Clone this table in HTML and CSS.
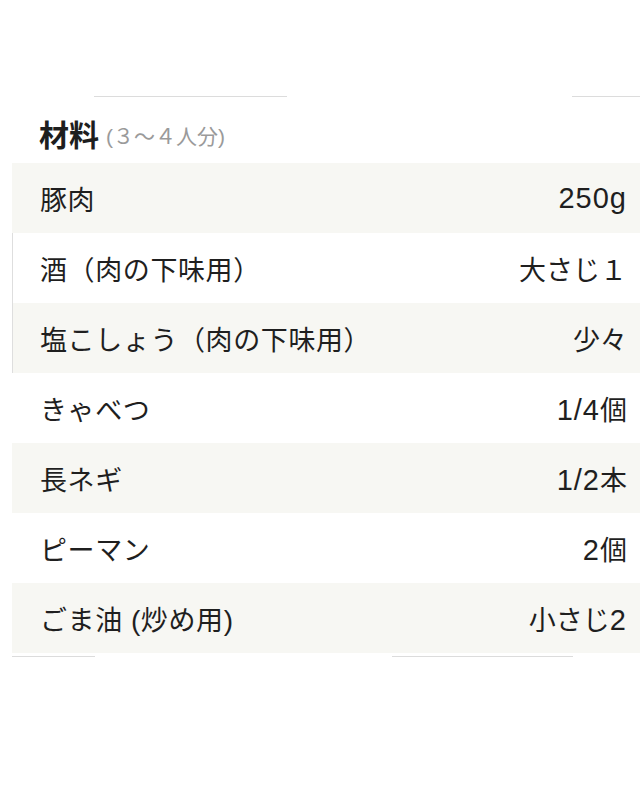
FILE: index.html
```html
<!DOCTYPE html>
<html lang="ja">
<head>
<meta charset="utf-8">
<title>材料</title>
<link rel="stylesheet" href="styles.css">
</head>
<body>
<div class="rules rules-top"><span class="seg seg-a"></span><span class="seg seg-b"></span></div>
<div class="title"><h2>材料</h2><span class="serves">(３〜４人分)</span></div>
<div class="table">
  <div class="row shade"><span class="name">豚肉</span><span class="qty"><span class="num">250g</span></span></div>
  <div class="row edge"><span class="name">酒（肉の下味用）</span><span class="qty">大さじ１</span></div>
  <div class="row shade edge"><span class="name">塩こしょう（肉の下味用）</span><span class="qty">少々</span></div>
  <div class="row"><span class="name">きゃべつ</span><span class="qty"><span class="num">1/4</span>個</span></div>
  <div class="row shade"><span class="name">長ネギ</span><span class="qty"><span class="num">1/2</span>本</span></div>
  <div class="row"><span class="name">ピーマン</span><span class="qty"><span class="num">2</span>個</span></div>
  <div class="row shade"><span class="name">ごま油 <span class="lat">(</span>炒め用<span class="lat">)</span></span><span class="qty">小さじ<span class="num">2</span></span></div>
</div>
<div class="rules rules-bottom"><span class="seg seg-c"></span><span class="seg seg-d"></span></div>
</body>
</html>
```
FILE: styles.css
```css
html, body {
  margin: 0;
  padding: 0;
  background: #fff;
  font-family: "Liberation Sans", "Noto Sans CJK JP", sans-serif;
  color: #222;
}
.rules {
  display: flex;
  height: 1px;
}
.seg {
  display: block;
  height: 1px;
  background: #dcdcdc;
}
.rules-top {
  margin-top: 96px;
}
.seg-a { margin-left: 94px; width: 193px; }
.seg-b { margin-left: 285px; flex: 1; }
.title {
  height: 66px;
  display: flex;
  align-items: center;
  padding-left: 39px;
  padding-top: 6px;
  box-sizing: border-box;
  gap: 7px;
}
.title h2 {
  margin: 0;
  font-size: 30px;
  font-weight: 700;
  color: #1e1e1e;
}
.serves {
  font-size: 21px;
  color: #9a9a9a;
  margin-top: 4px;
}
.table {
  margin-left: 12px;
}
.row {
  height: 70px;
  display: flex;
  align-items: center;
  justify-content: space-between;
  padding: 0 13px 0 28px;
  font-size: 27px;
  letter-spacing: 0.6px;
  color: #1f1f1f;
}
.qty {
  letter-spacing: 0;
}
.num {
  font-size: 29px;
  letter-spacing: 1px;
  margin: 0 3px;
}
.qty .num:last-child {
  margin-right: 0;
}
.qty .num:first-child {
  margin-left: 0;
}
.lat {
  font-size: 28px;
}
.shade {
  background: #f7f7f3;
}
.edge {
  box-shadow: inset 1px 0 0 #dedede;
}
.rules-bottom {
  margin-top: 3px;
}
.seg-c { margin-left: 12px; width: 83px; }
.seg-d { margin-left: 297px; width: 181px; }
```
